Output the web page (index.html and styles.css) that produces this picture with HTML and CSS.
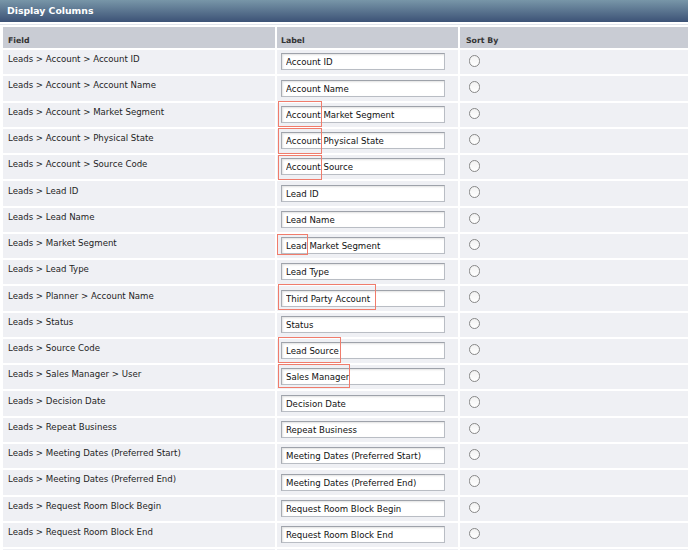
FILE: index.html
```html
<!DOCTYPE html>
<html>
<head>
<meta charset="utf-8">
<link rel="stylesheet" href="styles.css">
</head>
<body>
<div class="titlebar">Display Columns</div>
<div class="grid">
  <div class="hcell h-field">Field</div>
  <div class="hcell h-label">Label</div>
  <div class="hcell h-sort">Sort By</div>

  <div class="cell field">Leads &gt; Account &gt; Account ID</div><div class="cell label"><input class="txt" type="text" value="Account ID"></div><div class="cell sort"><span class="radio"></span></div>
  <div class="cell field">Leads &gt; Account &gt; Account Name</div><div class="cell label"><input class="txt" type="text" value="Account Name"></div><div class="cell sort"><span class="radio"></span></div>
  <div class="cell field">Leads &gt; Account &gt; Market Segment</div><div class="cell label"><input class="txt" type="text" value="Account Market Segment"></div><div class="cell sort"><span class="radio"></span></div>
  <div class="cell field">Leads &gt; Account &gt; Physical State</div><div class="cell label"><input class="txt" type="text" value="Account Physical State"></div><div class="cell sort"><span class="radio"></span></div>
  <div class="cell field">Leads &gt; Account &gt; Source Code</div><div class="cell label"><input class="txt" type="text" value="Account Source"></div><div class="cell sort"><span class="radio"></span></div>
  <div class="cell field">Leads &gt; Lead ID</div><div class="cell label"><input class="txt" type="text" value="Lead ID"></div><div class="cell sort"><span class="radio"></span></div>
  <div class="cell field">Leads &gt; Lead Name</div><div class="cell label"><input class="txt" type="text" value="Lead Name"></div><div class="cell sort"><span class="radio"></span></div>
  <div class="cell field">Leads &gt; Market Segment</div><div class="cell label"><input class="txt" type="text" value="Lead Market Segment"></div><div class="cell sort"><span class="radio"></span></div>
  <div class="cell field">Leads &gt; Lead Type</div><div class="cell label"><input class="txt" type="text" value="Lead Type"></div><div class="cell sort"><span class="radio"></span></div>
  <div class="cell field">Leads &gt; Planner &gt; Account Name</div><div class="cell label"><input class="txt" type="text" value="Third Party Account"></div><div class="cell sort"><span class="radio"></span></div>
  <div class="cell field">Leads &gt; Status</div><div class="cell label"><input class="txt" type="text" value="Status"></div><div class="cell sort"><span class="radio"></span></div>
  <div class="cell field">Leads &gt; Source Code</div><div class="cell label"><input class="txt" type="text" value="Lead Source"></div><div class="cell sort"><span class="radio"></span></div>
  <div class="cell field">Leads &gt; Sales Manager &gt; User</div><div class="cell label"><input class="txt" type="text" value="Sales Manager"></div><div class="cell sort"><span class="radio"></span></div>
  <div class="cell field">Leads &gt; Decision Date</div><div class="cell label"><input class="txt" type="text" value="Decision Date"></div><div class="cell sort"><span class="radio"></span></div>
  <div class="cell field">Leads &gt; Repeat Business</div><div class="cell label"><input class="txt" type="text" value="Repeat Business"></div><div class="cell sort"><span class="radio"></span></div>
  <div class="cell field">Leads &gt; Meeting Dates (Preferred Start)</div><div class="cell label"><input class="txt" type="text" value="Meeting Dates (Preferred Start)"></div><div class="cell sort"><span class="radio"></span></div>
  <div class="cell field">Leads &gt; Meeting Dates (Preferred End)</div><div class="cell label"><input class="txt" type="text" value="Meeting Dates (Preferred End)"></div><div class="cell sort"><span class="radio"></span></div>
  <div class="cell field">Leads &gt; Request Room Block Begin</div><div class="cell label"><input class="txt" type="text" value="Request Room Block Begin"></div><div class="cell sort"><span class="radio"></span></div>
  <div class="cell field">Leads &gt; Request Room Block End</div><div class="cell label"><input class="txt" type="text" value="Request Room Block End"></div><div class="cell sort"><span class="radio"></span></div>
  <div class="cell field"></div><div class="cell label"></div><div class="cell sort"></div>
</div>

<div class="mark m1"></div>
<div class="mark m2"></div>
<div class="mark m3"></div>
<div class="mark m4"></div>
<div class="mark m5"></div>
<div class="mark m6"></div>
<div class="mark m7"></div>
</body>
</html>
```
FILE: styles.css
```css
html, body {
  margin: 0;
  padding: 0;
  background: #ffffff;
  overflow: hidden;
}
body {
  position: relative;
  width: 688px;
  height: 550px;
  font-family: "DejaVu Sans", Verdana, sans-serif;
  color: #1e1e1e;
}
.titlebar {
  height: 22px;
  line-height: 22px;
  padding-left: 7px;
  font-size: 9.3px;
  font-weight: bold;
  color: #ffffff;
  background: linear-gradient(#7896a8, #3c5276);
}
.grid {
  display: grid;
  grid-template-columns: 272px 181px 228px;
  grid-template-rows: 21.5px;
  grid-auto-rows: 24.28px;
  gap: 2px;
  margin-top: 2px;
  border-top: 1px solid #e1e5ec;
  padding: 1.5px 0 0 3px;
}
.hcell {
  background: #c9ccd4;
  font-size: 7.8px;
  font-weight: bold;
  color: #333333;
  line-height: 11px;
  padding-top: 8px;
}
.h-field { padding-left: 5px; }
.h-label { padding-left: 4px; }
.h-sort { padding-left: 6px; }
.cell {
  background: #eff0f4;
  font-size: 8.6px;
  line-height: 11px;
  white-space: nowrap;
  overflow: hidden;
}
.field {
  padding: 4.2px 0 0 5px;
}
.label {
  padding: 3.3px 0 0 4px;
}
.sort {
  padding: 5px 0 0 8.5px;
}
.txt {
  display: block;
  box-sizing: border-box;
  width: 164px;
  height: 17px;
  margin: 0;
  padding: 1px 0 0 4px;
  font-family: "DejaVu Sans", Verdana, sans-serif;
  font-size: 8.6px;
  color: #111111;
  background: #ffffff;
  border: 1px solid #b9bdc4;
  border-top-color: #9ea2aa;
  border-left-color: #a8acb3;
  box-shadow: inset 1px 1px 2px rgba(0, 0, 0, 0.12);
  outline: none;
}
.radio {
  display: block;
  box-sizing: border-box;
  width: 11.5px;
  height: 11.5px;
  border-radius: 50%;
  border: 1px solid #888888;
  background: linear-gradient(#f2f2f2, #ffffff);
}
.mark {
  position: absolute;
  box-sizing: border-box;
  border: 1.5px solid #f07c6c;
}
.m1 { left: 278px; top: 101px; width: 44px; height: 26px; }
.m2 { left: 278px; top: 128px; width: 44px; height: 26px; }
.m3 { left: 278px; top: 155px; width: 44px; height: 25px; }
.m4 { left: 277px; top: 234px; width: 31px; height: 21px; }
.m5 { left: 278px; top: 284px; width: 98px; height: 26px; }
.m6 { left: 278px; top: 337px; width: 63px; height: 26px; }
.m7 { left: 278px; top: 364px; width: 72px; height: 24px; }
```
